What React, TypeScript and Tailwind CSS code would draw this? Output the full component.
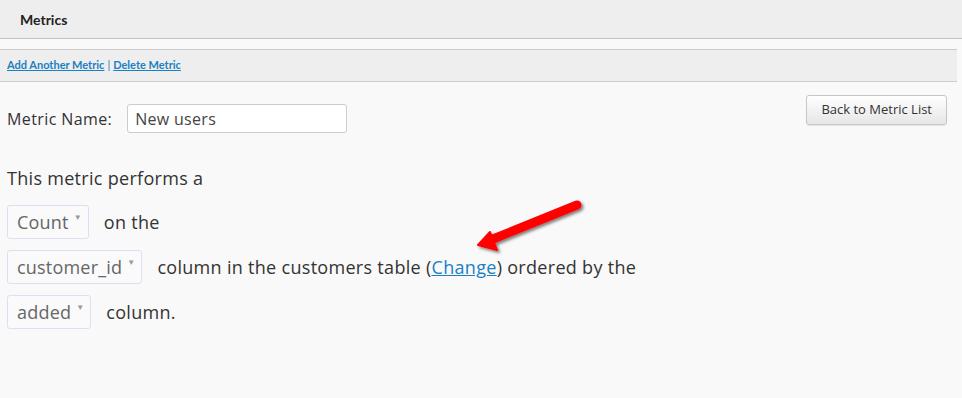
import React from 'react';

const Select: React.FC<{ value: string }> = ({ value }) => (
  <div className="flex items-center h-[34px] pl-[9px] pr-[6px] border border-[#e2ddf3] rounded-[3px] bg-[#fafafa] text-[#666] text-[18px] tracking-[0.2px]">
    <span>{value}</span>
    <span className="ml-[5px] -mt-[10px] text-[8px] text-[#999]">▼</span>
  </div>
);

const Arrow: React.FC = () => (
  <svg className="absolute left-[465px] top-[195px]" width="130" height="65" viewBox="0 0 130 65">
    <defs>
      <filter id="sh" x="-20%" y="-20%" width="140%" height="140%">
        <feDropShadow dx="2" dy="2" stdDeviation="1.5" floodColor="#000" floodOpacity="0.5" />
      </filter>
    </defs>
    <g filter="url(#sh)" fill="#ff0000" stroke="#ff0000">
      <line x1="112" y1="10" x2="28" y2="44" strokeWidth="9" strokeLinecap="round" />
      <polygon points="13,50 25,37 32,55" strokeWidth="2" strokeLinejoin="round" />
    </g>
  </svg>
);

export default function App() {
  return (
    <div className="relative w-[962px] h-[398px] bg-[#f9f9f9] text-[#333] font-['Open_Sans',sans-serif] overflow-hidden">
      {/* Header */}
      <div className="h-[39px] bg-[#eeeeee] border-b border-[#c4c4c4] flex items-center pl-[20px] font-['Lato',sans-serif]">
        <h1 className="text-[14px] font-bold text-[#222]">Metrics</h1>
      </div>

      {/* Toolbar */}
      <div className="mt-[10px] w-[957px] h-[33px] bg-[#eeeeee] border-y border-[#cccccc] flex items-center pl-[7px] text-[11px] font-bold font-['Lato',sans-serif]">
        <a href="#" className="text-[#1a80c4] underline">Add Another Metric</a>
        <span className="mx-[3px] text-[#1a80c4] font-normal">|</span>
        <a href="#" className="text-[#1a80c4] underline">Delete Metric</a>
      </div>

      {/* Body */}
      <div className="flex justify-between pl-[7px] pr-[15px] pt-[13px]">
        <div className="flex items-center gap-[15px] mt-[9px]">
          <span className="text-[16px] tracking-[0.4px]">Metric Name:</span>
          <input
            defaultValue="New users"
            className="w-[220px] h-[29px] px-[7px] bg-white border border-[#cccccc] rounded-[3px] text-[16px] tracking-[0.3px] text-[#444] outline-none"
          />
        </div>
        <button className="h-[30px] px-[14px] text-[13px] text-[#333] border border-[#c6c6c6] rounded-[3px] bg-gradient-to-b from-[#ffffff] to-[#e6e6e6] shadow-[0_1px_1px_rgba(0,0,0,0.08)]">
          Back to Metric List
        </button>
      </div>

      <div className="pl-[7px] text-[18px] tracking-[0.3px]">
        <p className="mt-[32px]">This metric performs a</p>
        <div className="mt-[13px] flex items-center gap-[15px]">
          <Select value="Count" />
          <span>on the</span>
        </div>
        <div className="mt-[11px] flex items-center gap-[15px]">
          <Select value="customer_id" />
          <span>
            column in the customers table (
            <a href="#" className="text-[#1a80c4] underline">Change</a>) ordered by the
          </span>
        </div>
        <div className="mt-[11px] flex items-center gap-[15px]">
          <Select value="added" />
          <span>column.</span>
        </div>
      </div>

      <Arrow />
    </div>
  );
}
